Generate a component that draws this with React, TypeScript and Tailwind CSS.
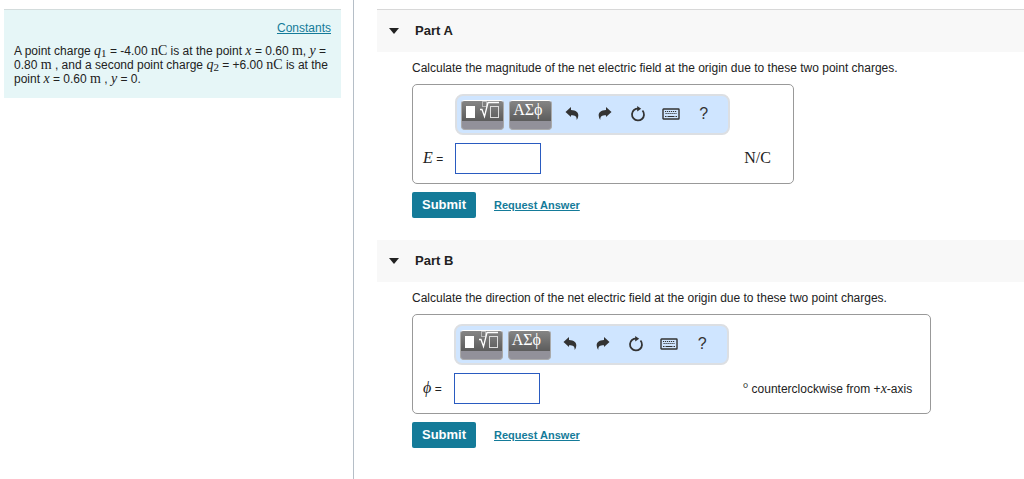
import type { ReactNode } from "react";

const MathText: React.FC<{ children: ReactNode }> = ({ children }) => (
  <span className="font-['Liberation_Serif',serif] text-sm leading-none">
    {children}
  </span>
);

const Variable: React.FC<{ children: ReactNode }> = ({ children }) => (
  <i className="font-['Liberation_Serif',serif] text-sm leading-none">
    {children}
  </i>
);

const Sub: React.FC<{ children: ReactNode }> = ({ children }) => (
  <sub className="bottom-[-2px] font-['Liberation_Serif',serif] text-[11px]">
    {children}
  </sub>
);

const UndoIcon = () => (
  <svg viewBox="0 0 14 14" className="h-3.5 w-3.5" fill="#333">
    <path d="M.5 5 6 0v3c5 .2 7.600 2.600 7.300 5.700-.1 1.500-.6 2.900-1.600 4.300.1-3.800-1.400-4.800-5.700-4.800V10z" />
  </svg>
);

const RedoIcon = () => (
  <svg viewBox="0 0 14 14" className="h-3.5 w-3.5" fill="#333">
    <path d="M13.500 5 8 0v3C3 3.200.4 5.600.7 8.700c.1 1.500.6 2.900 1.600 4.300-.1-3.800 1.400-4.800 5.700-4.800V10z" />
  </svg>
);

const ResetIcon = () => (
  <svg viewBox="0 0 16 16" className="h-4 w-4" fill="none">
    <path
      d="M12.500 4.500a6 6 0 1 1-8.500-.5Q5.800 2.700 8 2.700"
      stroke="#333"
      strokeWidth="1.800"
    />
    <path d="M7.200 0v5.600L11.200 2.800z" fill="#333" />
  </svg>
);

const KeyboardIcon = () => (
  <svg viewBox="0 0 18 12" className="h-3 w-[18px]" fill="none" stroke="#333">
    <rect x="1" y="1" width="16" height="10" rx="0.500" strokeWidth="1.400" />
    <path d="M3 3.500h12M3.500 5.500h11" strokeWidth="1.200" strokeDasharray="1.200 0.800" />
    <path d="M3 8.500h1.500M5.500 8.500h7M13.500 8.500H15" strokeWidth="1.200" />
  </svg>
);

const TemplateIcon = () => (
  <svg viewBox="0 0 34 18" className="h-[18px] w-[34px]" fill="none" stroke="#fff">
    <rect x="1" y="5" width="9" height="12" fill="#fff" stroke="none" />
    <rect x="17.500" y="0.500" width="4" height="5" stroke="#bbb" />
    <path d="M15 8.500h2l2.500 7 3.500-14h11" strokeWidth="1.300" />
    <rect x="25.500" y="5.500" width="8" height="11" stroke="#ddd" />
  </svg>
);

const PaletteButton: React.FC<{ label: string; children: ReactNode }> = ({
  label,
  children,
}) => (
  <button
    type="button"
    aria-label={label}
    className="flex h-[30px] w-[43px] flex-col overflow-hidden rounded border border-[#aaa] border-t-white bg-[#92919a]"
  >
    <span className="flex h-5 w-full items-start bg-linear-to-b from-[#858585] to-[#5c5c5c] pl-[3px]">
      {children}
    </span>
  </button>
);

const ToolButton: React.FC<{ label: string; children: ReactNode }> = ({
  label,
  children,
}) => (
  <button
    type="button"
    aria-label={label}
    className="flex h-7 w-[33px] items-center justify-center text-base text-[#333]"
  >
    {children}
  </button>
);

const Toolbar = () => (
  <div className="flex h-[41px] w-[275px] items-start rounded-lg border-2 border-[#dcdfe3] bg-[#cfe5ff] pt-1 pl-1">
    <div className="flex gap-[5px]">
      <PaletteButton label="Templates">
        <TemplateIcon />
      </PaletteButton>
      <PaletteButton label="Symbols">
        <span className="font-['Liberation_Serif',serif] text-base leading-[18px] text-white">
          ΑΣϕ
        </span>
      </PaletteButton>
    </div>
    <div className="flex pl-[3px]">
      <ToolButton label="Undo">
        <UndoIcon />
      </ToolButton>
      <ToolButton label="Redo">
        <RedoIcon />
      </ToolButton>
      <ToolButton label="Reset">
        <ResetIcon />
      </ToolButton>
      <ToolButton label="Keyboard shortcuts">
        <KeyboardIcon />
      </ToolButton>
      <ToolButton label="Help">?</ToolButton>
    </div>
  </div>
);

interface PartProps {
  id: string;
  title: string;
  prompt: string;
  symbol: string;
  units: ReactNode;
}

const Part: React.FC<PartProps> = ({ id, title, prompt, symbol, units }) => (
  <section>
    <h2 className="bg-[#f8f8f8]">
      <button
        type="button"
        className="flex h-[42px] w-full items-center gap-4 pl-3 text-[13px] font-bold"
      >
        <svg viewBox="0 0 10 6" className="h-1.5 w-2.5" fill="#222">
          <path d="M0 0h10L5 6z" />
        </svg>
        {title}
      </button>
    </h2>
    <div className="pl-[35px]">
      <p className="pt-2 leading-4">{prompt}</p>
      <div className="mt-2 grid h-[100px] w-fit grid-cols-[auto_auto_auto] content-start items-center gap-y-2 rounded-[5px] border border-[#999] pt-[9px] pr-[18px] pl-2.5">
        <div className="col-start-2">
          <Toolbar />
        </div>
        <label htmlFor={id} className="col-start-1 pr-3">
          <i className="font-['Liberation_Serif',serif] text-base leading-none">
            {symbol}
          </i>{" "}
          =
        </label>
        <input
          id={id}
          type="text"
          className="h-[31px] w-[86px] border border-[#2a5bc0] bg-white px-1 outline-none"
        />
        <div className="pl-3.5">{units}</div>
      </div>
      <div className="mt-2 flex items-center gap-[18px]">
        <button
          type="submit"
          className="h-[26px] w-16 rounded-xs bg-[#147b99] text-[13px] font-bold text-white"
        >
          Submit
        </button>
        <a href="#" className="text-[11px] font-bold text-[#147b99] underline">
          Request Answer
        </a>
      </div>
    </div>
  </section>
);

const Intro = () => (
  <div className="border-t border-[#d3dcdc] bg-[#e6f6f7] px-2.5 pt-2.5 pb-3">
    <div className="text-right leading-4">
      <a href="#" className="text-[#147b99] underline">
        Constants
      </a>
    </div>
    <p className="mt-2 leading-[14px]">
      A point charge <Variable>q</Variable>
      <Sub>1</Sub> = -4.00 <MathText>nC</MathText> is at the point{" "}
      <Variable>x</Variable> = 0.60 <MathText>m</MathText>,{" "}
      <Variable>y</Variable> = 0.80 <MathText>m</MathText> , and a second point
      charge <Variable>q</Variable>
      <Sub>2</Sub> = +6.00 <MathText>nC</MathText> is at the point{" "}
      <Variable>x</Variable> = 0.60 <MathText>m</MathText> ,{" "}
      <Variable>y</Variable> = 0.
    </p>
  </div>
);

export default function App() {
  return (
    <div className="flex min-h-screen bg-white font-['Liberation_Sans',Arial,sans-serif] text-xs text-[#222]">
      <aside className="w-[354px] shrink-0 border-r border-[#b5bec7] pt-[9px] pr-3 pl-1">
        <Intro />
      </aside>
      <main className="min-w-0 grow pt-[9px] pl-[23px]">
        <div className="flex flex-col gap-[22px] border-t border-[#d8d8d8]">
          <Part
            id="magnitude"
            title="Part A"
            prompt="Calculate the magnitude of the net electric field at the origin due to these two point charges."
            symbol="E"
            units={
              <span className="pr-1 font-['Liberation_Serif',serif] text-base leading-none">
                N/C
              </span>
            }
          />
          <Part
            id="direction"
            title="Part B"
            prompt="Calculate the direction of the net electric field at the origin due to these two point charges."
            symbol="ϕ"
            units={
              <>
                <MathText>°</MathText> counterclockwise from +
                <Variable>x</Variable>-axis
              </>
            }
          />
        </div>
      </main>
    </div>
  );
}
